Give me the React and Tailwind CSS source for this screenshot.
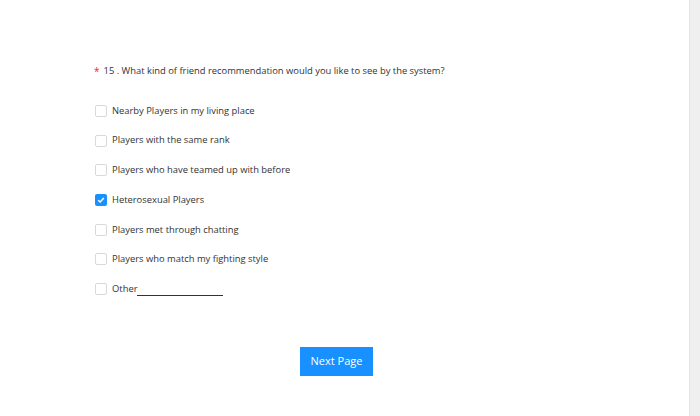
import { useState } from 'react'

const options = [
    'Nearby Players in my living place',
    'Players with the same rank',
    'Players who have teamed up with before',
    'Heterosexual Players',
    'Players met through chatting',
    'Players who match my fighting style',
]

function Box({ checked }) {
    if (checked) {
        return (
            <span className="w-[12px] h-[12px] rounded-[2px] bg-[#1890ff] flex items-center justify-center shrink-0">
                <svg width="8" height="8" viewBox="0 0 8 8">
                    <path d="M1.2 4.2 L3.2 6 L6.8 2" fill="none" stroke="white" strokeWidth="1.5" />
                </svg>
            </span>
        )
    }
    return <span className="w-[12px] h-[12px] rounded-[2px] border border-[#d9d9d9] bg-white shrink-0" />
}

export default function App() {
    const [selected, setSelected] = useState([3])

    function toggle(i) {
        setSelected(selected.includes(i) ? selected.filter(x => x !== i) : [...selected, i])
    }

    return (
        <div className="w-[700px] h-[416px] flex bg-white text-[#333]" style={{ fontFamily: '"Open Sans", "Noto Sans", sans-serif' }}>
            <div className="flex-1 flex flex-col">
                <div className="pl-[94px] pt-[64px] text-[9.4px] flex items-center">
                    <span className="text-[#f5222d] text-[10px] mr-[4px]">*</span>
                    <span>15 . What kind of friend recommendation would you like to see by the system?</span>
                </div>
                <div className="pl-[95px] pt-[17px] flex flex-col">
                    {options.map((opt, i) => (
                        <label key={i} className="h-[29.7px] flex items-center gap-[5px] text-[9.4px] cursor-pointer" onClick={() => toggle(i)}>
                            <Box checked={selected.includes(i)} />
                            <span>{opt}</span>
                        </label>
                    ))}
                    <div className="h-[29.7px] flex items-center gap-[5px] text-[9.4px]">
                        <Box checked={false} />
                        <span>Other</span>
                        <span className="w-[86px] h-[12px] border-b border-[#333] -ml-[5px] mt-[2px]" />
                    </div>
                </div>
                <div className="flex justify-center pt-[43px]">
                    <button className="w-[73px] h-[29px] bg-[#1890ff] text-white text-[11px] ml-[-16px]">Next Page</button>
                </div>
            </div>
            <div className="w-[11px] h-full bg-[#efefef] border-l border-[#e4e4e4]" />
        </div>
    )
}
